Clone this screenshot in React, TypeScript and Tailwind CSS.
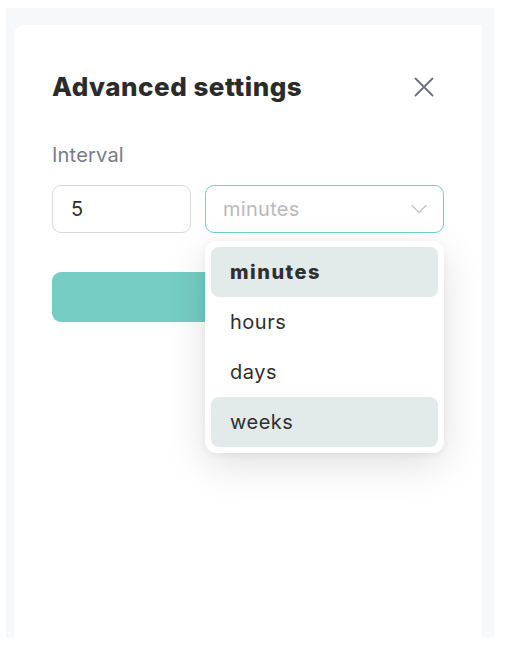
const options = [
  { label: "minutes", selected: true, active: true },
  { label: "hours", selected: false, active: false },
  { label: "days", selected: false, active: false },
  { label: "weeks", selected: false, active: true },
];

const CloseIcon = () => (
  <svg width="20" height="20" viewBox="0 0 20 20" fill="none" stroke="#6b7080" strokeWidth="1.8" strokeLinecap="round">
    <path d="M1.5 1.5 L18.5 18.5 M18.5 1.5 L1.5 18.5" />
  </svg>
);

const Chevron = () => (
  <svg width="16" height="10" viewBox="0 0 16 10" fill="none" stroke="#c4c4c4" strokeWidth="1.3" strokeLinecap="round" strokeLinejoin="round">
    <path d="M1 1.5 L8 8.5 L15 1.5" />
  </svg>
);

export default function App() {
  return (
    <div className="w-[508px] h-[664px] bg-white font-['Inter',sans-serif] text-[#2f2f2f] overflow-hidden">
      <div className="ml-[6px] mt-[8px] w-[488px] h-[630px] bg-[#f7f8fa] pl-[8px] pr-[12px] pt-[17px]">
        <div className="h-full bg-white rounded-tl-[10px] px-[38px] pt-[46px]">
          {/* Header */}
          <div className="flex items-center justify-between">
            <h1 className="text-[26px] leading-[32px] font-extrabold tracking-[0.5px] text-[#2b2b2b]">Advanced settings</h1>
            <button className="mr-[10px] p-0">
              <CloseIcon />
            </button>
          </div>

          <p className="mt-[38px] text-[20px] leading-[28px] text-[#767c8c] tracking-[0.2px]">Interval</p>

          <div className="relative mt-[16px] flex gap-[14px]">
            <div className="w-[139px] h-[48px] rounded-[9px] border border-[#dadada] flex items-center pl-[18px] text-[20px]">
              5
            </div>
            <div className="flex-1 h-[48px] rounded-[9px] border-[1.5px] border-[#72d1c3] flex items-center justify-between pl-[17px] pr-[16px] text-[20px] tracking-[0.3px] text-[#b9b9b9]">
              <span>minutes</span>
              <Chevron />
            </div>

            {/* Dropdown menu */}
            <div className="absolute left-[153px] right-0 top-[56px] z-10 bg-white rounded-[11px] p-[6px] shadow-[0_12px_40px_rgba(0,0,0,0.12),0_2px_8px_rgba(0,0,0,0.05)]">
              {options.map((opt) => (
                <div
                  key={opt.label}
                  className={`h-[50px] flex items-center pl-[19px] rounded-[8px] text-[20px] ${
                    opt.active ? "bg-[#e2ebe9]" : ""
                  } ${opt.selected ? "font-extrabold tracking-[1.5px]" : "tracking-[0.5px]"}`}
                >
                  {opt.label}
                </div>
              ))}
            </div>
          </div>

          <button className="mt-[39px] w-full h-[50px] rounded-[9px] bg-[#75cdc3]" />
        </div>
      </div>
    </div>
  );
}
